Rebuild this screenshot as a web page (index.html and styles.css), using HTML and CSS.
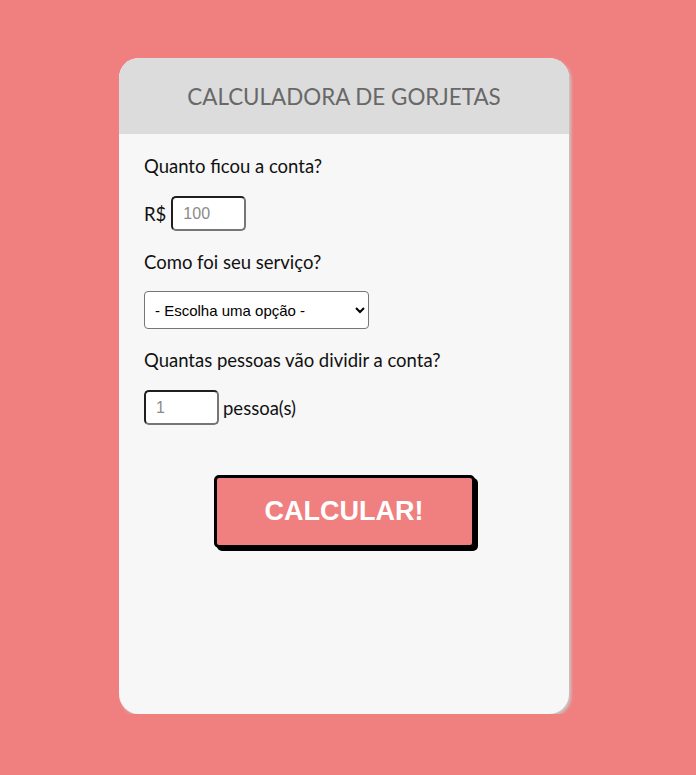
FILE: index.html
```html
<!DOCTYPE html>
<html lang="pt-BR">
<head>
<meta charset="utf-8">
<title>Calculadora de Gorjetas</title>
<link rel="stylesheet" href="styles.css">
</head>
<body>
<div class="card">
  <div class="header"><h1 class="title">CALCULADORA DE GORJETAS</h1></div>
  <div class="content">
    <p class="label">Quanto ficou a conta?</p>
    <div class="row"><span class="unit">R$</span><input class="field" type="text" placeholder="100"></div>
    <p class="label">Como foi seu serviço?</p>
    <select class="choice">
      <option>- Escolha uma opção -</option>
    </select>
    <p class="label">Quantas pessoas vão dividir a conta?</p>
    <div class="row"><input class="field" type="text" placeholder="1"><span class="unit unit-after">pessoa(s)</span></div>
    <div class="actions"><button class="calc" type="button">CALCULAR!</button></div>
  </div>
</div>
</body>
</html>
```
FILE: styles.css
```css
html, body {
  margin: 0;
  padding: 0;
  background: #f08080;
}
body {
  padding-top: 58px;
  font-family: Lato, "Open Sans", sans-serif;
}
.card {
  width: 450px;
  height: 656px;
  margin-left: 119px;
  background: #f7f7f7;
  border-radius: 20px;
  box-shadow: 2px 2px 3px #c8c8c8;
  overflow: hidden;
}
.header {
  height: 76px;
  background: #dcdcdc;
  display: flex;
  align-items: center;
  justify-content: center;
}
.title {
  margin: 0;
  font-weight: 400;
  font-size: 22.4px;
  color: #686868;
}
.content {
  padding: 21px 25px 0 25px;
  display: flex;
  flex-direction: column;
  align-items: flex-start;
}
.label {
  margin: 0;
  font-size: 18.5px;
  line-height: 22px;
  color: #111;
}
.row {
  display: flex;
  align-items: center;
  margin-top: 19px;
  margin-bottom: 20px;
}
.unit {
  font-size: 18.5px;
  color: #111;
  margin-right: 5px;
}
.unit-after {
  margin-left: 4px;
  margin-right: 0;
}
.field {
  box-sizing: border-box;
  width: 75px;
  height: 35px;
  border: 2px solid;
  border-color: #1f1f1f #767676 #767676 #1f1f1f;
  border-radius: 5px;
  background: #fff;
  padding: 0 10px;
  font-family: Arial, "Liberation Sans", sans-serif;
  font-size: 16px;
  outline: none;
}
.field::placeholder {
  color: #8a8a8a;
}
.choice {
  box-sizing: border-box;
  margin-top: 18px;
  margin-bottom: 20px;
  width: 225px;
  height: 38px;
  border: 1px solid #767676;
  border-radius: 4px;
  background: #fff;
  padding: 0 6px;
  font-family: Arial, "Liberation Sans", sans-serif;
  font-size: 15px;
  color: #000;
}
.actions {
  align-self: stretch;
  display: flex;
  justify-content: center;
  margin-top: 30px;
}
.calc {
  box-sizing: border-box;
  width: 261px;
  height: 73px;
  background: #f08080;
  border: 3px solid #000;
  border-radius: 5px;
  box-shadow: 3px 3px 0 #000;
  color: #fff;
  font-family: Arial, "Liberation Sans", sans-serif;
  font-weight: 700;
  font-size: 27px;
  cursor: pointer;
}
```
